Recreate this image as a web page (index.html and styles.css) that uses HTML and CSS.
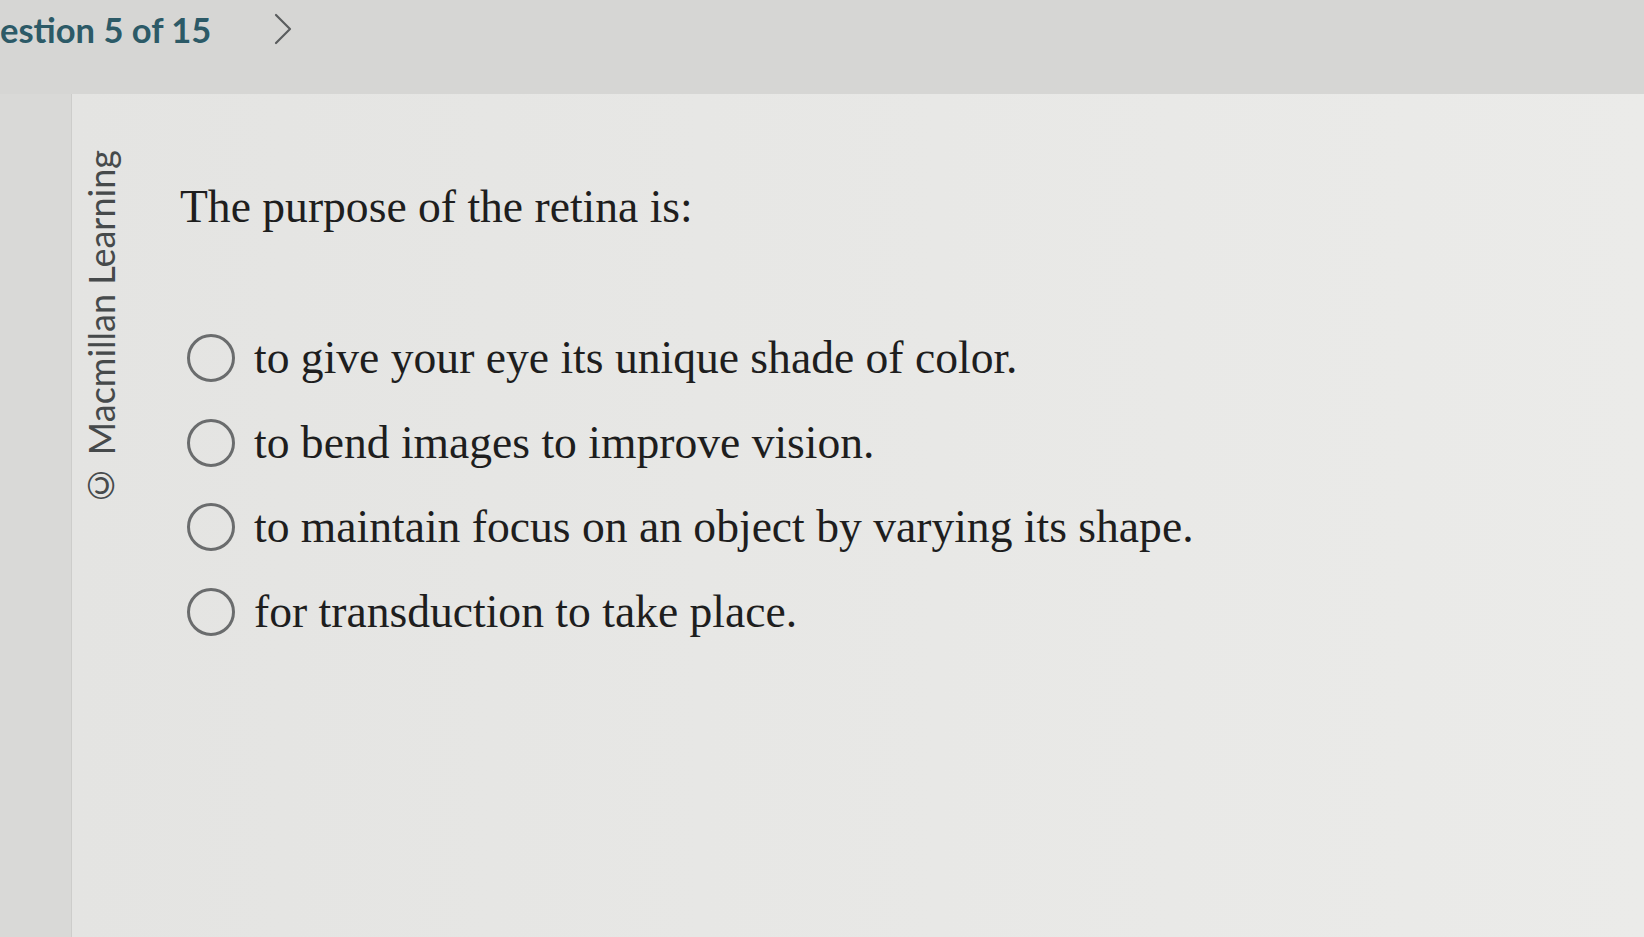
FILE: index.html
```html
<!DOCTYPE html>
<html lang="en">
<head>
<meta charset="utf-8">
<title>Question 5 of 15</title>
<link rel="stylesheet" href="styles.css">
</head>
<body>
  <header class="topbar">
    <span class="qnum">estion 5 of 15</span>
    <svg class="chev" width="20" height="32" viewBox="0 0 20 32" aria-hidden="true">
      <polyline points="3,2 17,16 3,30" fill="none" stroke="#5a5d5e" stroke-width="2.2" stroke-linecap="round" stroke-linejoin="round"/>
    </svg>
  </header>
  <div class="stage">
    <main class="card">
      <div class="credit">© Macmillan Learning</div>
      <section class="question">
        <p class="prompt">The purpose of the retina is:</p>
        <ul class="options">
          <li class="option"><span class="radio"></span><span class="label">to give your eye its unique shade of color.</span></li>
          <li class="option"><span class="radio"></span><span class="label">to bend images to improve vision.</span></li>
          <li class="option"><span class="radio"></span><span class="label">to maintain focus on an object by varying its shape.</span></li>
          <li class="option"><span class="radio"></span><span class="label">for transduction to take place.</span></li>
        </ul>
      </section>
    </main>
  </div>
</body>
</html>
```

FILE: styles.css
```css
html, body {
  margin: 0;
  padding: 0;
  height: 100%;
}

body {
  background: #d6d6d4;
  display: flex;
  flex-direction: column;
  overflow: hidden;
}

.topbar {
  height: 94px;
  box-sizing: border-box;
  padding-top: 9px;
  display: flex;
  align-items: flex-start;
  gap: 62px;
  background: #d6d6d4;
  flex: none;
}

.qnum {
  font-family: Lato, "Open Sans", sans-serif;
  font-weight: 700;
  font-size: 34.5px;
  line-height: 41px;
  color: #2c5a67;
  white-space: nowrap;
}

.chev {
  display: block;
  margin-top: 4px;
}

.stage {
  flex: 1;
  display: flex;
  padding-left: 72px;
  background: #d9d9d7;
}

.card {
  flex: 1;
  display: flex;
  align-items: flex-start;
  padding-left: 8px;
  background: linear-gradient(90deg, #e4e4e2 0%, #e7e7e5 40%, #ebebe9 100%);
  box-shadow: -1px 0 0 #cdcdcb;
}

.credit {
  writing-mode: vertical-rl;
  transform: rotate(180deg);
  font-family: Lato, "Open Sans", sans-serif;
  font-size: 36px;
  line-height: 43px;
  color: #464a4b;
  margin-top: 56px;
  white-space: nowrap;
}

.question {
  padding-top: 86px;
  padding-left: 57px;
  font-family: "Liberation Serif", "Times New Roman", serif;
  font-size: 45.6px;
  color: #1e1e1e;
}

.prompt {
  margin: 0;
  line-height: 54px;
}

.options {
  list-style: none;
  margin: 97px 0 0;
  padding: 0 0 0 7px;
  display: flex;
  flex-direction: column;
  gap: 30.5px;
}

.option {
  display: flex;
  align-items: center;
  gap: 19px;
  line-height: 54px;
}

.radio {
  width: 48px;
  height: 48px;
  box-sizing: border-box;
  border: 3px solid #6a6c6d;
  border-radius: 50%;
  flex: none;
}

.label {
  white-space: nowrap;
}
```
